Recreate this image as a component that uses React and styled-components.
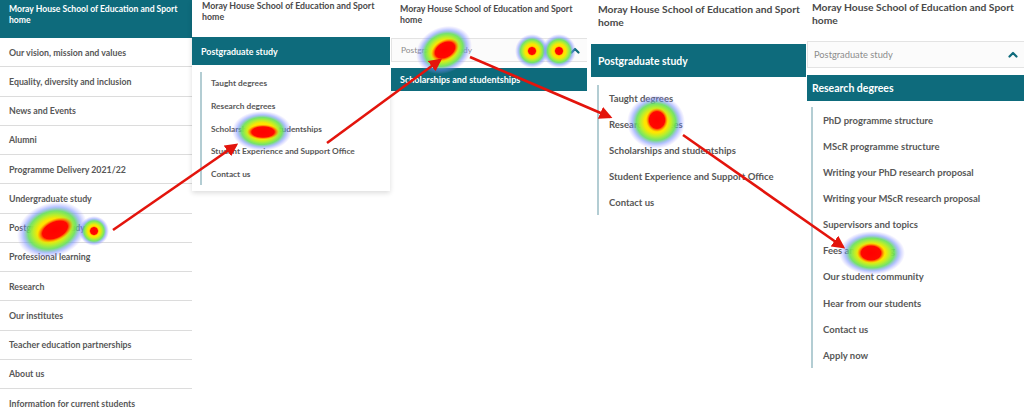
import React from 'react'
import styled, { createGlobalStyle } from 'styled-components'

const teal = '#0e6b7c'

const GlobalStyle = createGlobalStyle`
  html, body {
    margin: 0;
    padding: 0;
    background: #fff;
  }
  body {
    font-family: Lato, "Noto Sans", sans-serif;
  }
`

const Page = styled.div`
  position: relative;
  display: flex;
  align-items: flex-start;
  width: 1024px;
  height: 411px;
  overflow: hidden;
  background: #fff;
`

const Panel = styled.nav`
  flex: 0 0 ${p => p.$w}px;
  width: ${p => p.$w}px;
  background: #fff;
  font-weight: 700;
  box-shadow: ${p => (p.$shadow ? '0 2px 5px rgba(0, 0, 0, 0.14)' : 'none')};
  padding-bottom: ${p => p.$pb || 0}px;
`

const HomeHeader = styled.div`
  height: 38px;
  box-sizing: border-box;
  padding: 4px 6px 0 9px;
  background: ${teal};
  color: #fff;
  font-size: 8.6px;
  line-height: 11px;
`

const Row = styled.div`
  height: 28.25px;
  display: flex;
  align-items: center;
  padding-left: 9px;
  border-bottom: 1px solid #dcdcdc;
  color: #575757;
  font-size: 8.8px;
`

const Title = styled.div`
  height: ${p => p.$h}px;
  box-sizing: border-box;
  padding: ${p => p.$pt}px 0 0 ${p => p.$pl}px;
  font-size: ${p => p.$fs}px;
  line-height: ${p => p.$lh}px;
  color: #4a4a4a;
`

const ParentRow = styled.div`
  height: ${p => p.$h}px;
  margin: ${p => p.$m};
  display: flex;
  align-items: center;
  justify-content: space-between;
  padding: 0 ${p => p.$pr}px 0 ${p => p.$pl}px;
  background: #fbfbfb;
  border-top: 1px solid #e3e3e3;
  border-bottom: 1px solid #e3e3e3;
  border-left: 1px solid #e3e3e3;
  color: #8c8c8c;
  font-size: ${p => p.$fs}px;
  font-weight: 400;
`

const ActiveBar = styled.div`
  height: ${p => p.$h}px;
  margin: ${p => p.$m};
  display: flex;
  align-items: center;
  padding-left: ${p => p.$pl}px;
  background: ${teal};
  color: #fff;
  font-size: ${p => p.$fs}px;
`

const SubList = styled.ul`
  list-style: none;
  margin: ${p => p.$m};
  padding: 0;
  border-left: 2px solid #b3cdd3;
`

const SubItem = styled.li`
  height: ${p => p.$h}px;
  display: flex;
  align-items: center;
  padding-left: ${p => p.$pl}px;
  color: #585858;
  font-size: ${p => p.$fs}px;
`

const Overlay = styled.svg`
  position: absolute;
  left: 0;
  top: 0;
  pointer-events: none;
`

const Chevron = () => (
  <svg width="10" height="7" viewBox="0 0 10 7">
    <path d="M1.5 5.5 L5 2 L8.5 5.5" fill="none" stroke={teal} strokeWidth="2.2" strokeLinecap="round" strokeLinejoin="round" />
  </svg>
)

const mainMenu = [
  'Our vision, mission and values',
  'Equality, diversity and inclusion',
  'News and Events',
  'Alumni',
  'Programme Delivery 2021/22',
  'Undergraduate study',
  'Postgraduate study',
  'Professional learning',
  'Research',
  'Our institutes',
  'Teacher education partnerships',
  'About us',
  'Information for current students',
]

const pgMenu = [
  'Taught degrees',
  'Research degrees',
  'Scholarships and studentships',
  'Student Experience and Support Office',
  'Contact us',
]

const researchMenu = [
  'PhD programme structure',
  'MScR programme structure',
  'Writing your PhD research proposal',
  'Writing your MScR research proposal',
  'Supervisors and topics',
  'Fees and funding',
  'Our student community',
  'Hear from our students',
  'Contact us',
  'Apply now',
]

// heat spots: halo + red core(s)
const halos = [
  [52, 230, 36, 27, -20],
  [94, 231, 15, 15, 0],
  [262, 131, 30, 20, 0],
  [444, 50, 29, 23, -25],
  [532, 51, 17, 17, 0],
  [559, 51, 17, 17, 0],
  [656, 122, 29, 27, 0],
  [872, 253, 33, 22, 0],
]

const cores = [
  [55, 230, 19, 11, -25],
  [94, 231, 5, 5, 0],
  [263, 132, 16, 7.5, 0],
  [445, 50, 15, 10, -30],
  [532, 51, 5, 5, 0],
  [559, 51, 5, 5, 0],
  [657, 120, 11, 12, 0],
  [871, 253, 14, 10, 0],
]

const arrows = [
  [113, 230, 236, 145],
  [327, 143, 440, 60],
  [470, 57, 610, 117],
  [683, 135, 843, 247],
]

const HOME = 'Moray House School of Education and Sport home'

const App = () => (
  <Page>
    <GlobalStyle />

    <Panel $w={192}>
      <HomeHeader>{HOME}</HomeHeader>
      {mainMenu.map(item => (
        <Row key={item}>{item}</Row>
      ))}
    </Panel>

    <Panel $w={198} $shadow $pb={6}>
      <Title $h={37} $pt={1} $pl={10} $fs={8.8} $lh={10.7}>{HOME}</Title>
      <ActiveBar $h={28} $m="0" $pl={9} $fs={8.9}>Postgraduate study</ActiveBar>
      <SubList $m="7px 0 0 8px">
        {pgMenu.map(item => (
          <SubItem key={item} $h={22.7} $pl={9} $fs={8.3}>{item}</SubItem>
        ))}
      </SubList>
    </Panel>

    <Panel $w={200}>
      <Title $h={38} $pt={4} $pl={10} $fs={8.8} $lh={10.8}>{HOME}</Title>
      <ParentRow $h={22} $m="0 3px 0 1px" $pl={9} $pr={7} $fs={8.4}>
        Postgraduate study
        <Chevron />
      </ParentRow>
      <ActiveBar $h={23} $m="6px 3px 0 1px" $pl={9} $fs={9}>Scholarships and studentships</ActiveBar>
    </Panel>

    <Panel $w={216}>
      <Title $h={44} $pt={3} $pl={8} $fs={10.3} $lh={13}>{HOME}</Title>
      <ActiveBar $h={33} $m="0 0 0 1px" $pl={7} $fs={10.4}>Postgraduate study</ActiveBar>
      <SubList $m="8px 0 0 7px">
        {pgMenu.map(item => (
          <SubItem key={item} $h={26} $pl={10} $fs={9.5}>{item}</SubItem>
        ))}
      </SubList>
    </Panel>

    <Panel $w={218}>
      <Title $h={41} $pt={1} $pl={6} $fs={10.3} $lh={12.7}>{HOME}</Title>
      <ParentRow $h={25} $m="0 0 0 1px" $pl={6} $pr={6} $fs={9.3}>
        Postgraduate study
        <Chevron />
      </ParentRow>
      <ActiveBar $h={26} $m="7px 0 0 1px" $pl={5} $fs={10.5}>Research degrees</ActiveBar>
      <SubList $m="6px 0 0 5px">
        {researchMenu.map(item => (
          <SubItem key={item} $h={26.15} $pl={10} $fs={9.5}>{item}</SubItem>
        ))}
      </SubList>
    </Panel>

    <Overlay width="1024" height="411" viewBox="0 0 1024 411">
      <defs>
        <radialGradient id="halo">
          <stop offset="0%" stopColor="#ffd000" />
          <stop offset="40%" stopColor="#ffe600" />
          <stop offset="54%" stopColor="#b6ef2e" />
          <stop offset="68%" stopColor="#66e05a" stopOpacity="0.9" />
          <stop offset="82%" stopColor="#6a88ff" stopOpacity="0.5" />
          <stop offset="100%" stopColor="#a090ff" stopOpacity="0" />
        </radialGradient>
        <radialGradient id="core">
          <stop offset="0%" stopColor="#ff0000" />
          <stop offset="70%" stopColor="#ff0800" />
          <stop offset="100%" stopColor="#ff7a00" stopOpacity="0" />
        </radialGradient>
        <marker id="head" viewBox="0 0 10 10" refX="8" refY="5" markerWidth="5" markerHeight="5" orient="auto">
          <path d="M0 0 L10 5 L0 10 z" fill="#e3140c" />
        </marker>
      </defs>
      {halos.map(([cx, cy, rx, ry, r], i) => (
        <ellipse key={'h' + i} cx={cx} cy={cy} rx={rx} ry={ry} transform={`rotate(${r} ${cx} ${cy})`} fill="url(#halo)" />
      ))}
      {cores.map(([cx, cy, rx, ry, r], i) => (
        <ellipse key={'c' + i} cx={cx} cy={cy} rx={rx} ry={ry} transform={`rotate(${r} ${cx} ${cy})`} fill="url(#core)" />
      ))}
      {arrows.map(([x1, y1, x2, y2], i) => (
        <line key={'a' + i} x1={x1} y1={y1} x2={x2} y2={y2} stroke="#e3140c" strokeWidth="2.6" markerEnd="url(#head)" />
      ))}
    </Overlay>
  </Page>
)

export default App
